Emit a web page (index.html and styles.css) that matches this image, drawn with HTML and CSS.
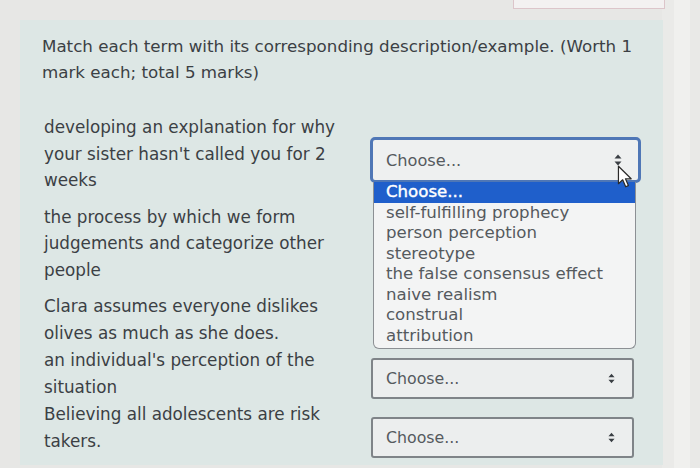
FILE: index.html
```html
<!DOCTYPE html>
<html>
<head>
<meta charset="utf-8">
<link rel="stylesheet" href="styles.css">
</head>
<body>
<div class="page">
  <div class="topbar"><div class="tab"></div></div>
  <div class="panel">
    <p class="title">Match each term with its corresponding description/example. (Worth 1 mark each; total 5 marks)</p>
    <div class="rows">
      <div class="row tall">
        <div class="term">developing an explanation for why your sister hasn't called you for 2 weeks</div>
        <div class="cell first">
          <div class="select focus"><span>Choose...</span><svg class="arrows" viewBox="0 0 8 12" width="8" height="12"><path d="M4 0.5 L7.5 4.5 H0.5 Z M4 11.5 L7.5 7.5 H0.5 Z" fill="#3a3f44"/></svg></div>
          <div class="menu">
            <div class="opt sel">Choose...</div>
            <div class="opt">self-fulfilling prophecy</div>
            <div class="opt">person perception</div>
            <div class="opt">stereotype</div>
            <div class="opt">the false consensus effect</div>
            <div class="opt">naive realism</div>
            <div class="opt">construal</div>
            <div class="opt">attribution</div>
          </div>
          <svg class="cursor" viewBox="0 0 12 19" width="15" height="23"><path d="M1 1 L1 15.5 L4.5 12.2 L7 18 L9.2 17 L6.8 11.4 L11.5 11.4 Z" fill="#ffffff" stroke="#2a2a2a" stroke-width="1" stroke-linejoin="round"/></svg>
        </div>
      </div>
      <div class="row tall">
        <div class="term">the process by which we form judgements and categorize other people</div>
        <div class="cell"><div class="select covered"><span>Choose...</span></div></div>
      </div>
      <div class="row">
        <div class="term">Clara assumes everyone dislikes olives as much as she does.</div>
        <div class="cell"><div class="select covered"><span>Choose...</span></div></div>
      </div>
      <div class="row">
        <div class="term">an individual's perception of the situation</div>
        <div class="cell mid"><div class="select"><span>Choose...</span><svg class="arrows" viewBox="0 0 8 12" width="7" height="11"><path d="M4 0.5 L7.5 4.5 H0.5 Z M4 11.5 L7.5 7.5 H0.5 Z" fill="#3a3f44"/></svg></div></div>
      </div>
      <div class="row">
        <div class="term">Believing all adolescents are risk takers.</div>
        <div class="cell low"><div class="select"><span>Choose...</span><svg class="arrows" viewBox="0 0 8 12" width="7" height="11"><path d="M4 0.5 L7.5 4.5 H0.5 Z M4 11.5 L7.5 7.5 H0.5 Z" fill="#3a3f44"/></svg></div></div>
      </div>
    </div>
  </div>
</div>
</body>
</html>
```

FILE: styles.css
```css
html, body {
  margin: 0;
  padding: 0;
}
body {
  width: 700px;
  height: 468px;
  overflow: hidden;
  font-family: "DejaVu Sans", "Open Sans", sans-serif;
  color: #3b4044;
  background: linear-gradient(to right, #e7e7e5 0, #e7e7e5 662px, #eaeae8 662px, #eaeae8 674px, #f0f0ee 674px, #f0f0ee 690px, #e9e9e7 690px);
}
.page {
  display: flex;
  flex-direction: column;
}
.topbar {
  height: 20px;
  display: flex;
  justify-content: flex-end;
  padding-right: 35px;
}
.tab {
  width: 150px;
  height: 9px;
  margin-top: -2px;
  background: #f3f1f1;
  border: 1px solid #dcc5ca;
}
.panel {
  margin-left: 20px;
  width: 643px;
  height: 445px;
  box-sizing: border-box;
  padding: 14px 0 0 22px;
  background: #dde7e5;
}
.title {
  margin: 0;
  font-size: 16.7px;
  line-height: 25.5px;
  width: 600px;
}
.rows {
  margin-top: 29px;
  display: flex;
  flex-direction: column;
}
.row {
  display: grid;
  grid-template-columns: 328px 1fr;
}
.term {
  font-size: 16.8px;
  line-height: 26.5px;
  padding-left: 2px;
  padding-right: 8px;
  padding-bottom: 1px;
}
.row.tall .term {
  padding-bottom: 10px;
}
.cell {
  position: relative;
  padding-top: 13px;
}
.cell.first {
  padding-top: 23px;
}
.cell.mid {
  padding-top: 11px;
}
.cell.low {
  padding-top: 16px;
}
.select {
  width: 263px;
  height: 41px;
  box-sizing: border-box;
  margin-left: 1px;
  border: 2px solid #7f8488;
  border-radius: 3px;
  background: #eceeee;
  padding: 0 17px 0 13px;
  display: flex;
  align-items: center;
  justify-content: space-between;
  font-size: 15.8px;
  color: #555a5e;
}
.select.covered {
  visibility: hidden;
}
.select.focus {
  width: 271px;
  height: 46px;
  margin-left: 0;
  border: 3px solid #4f77b6;
  border-radius: 5px;
  font-size: 16.2px;
  padding: 0 16px 0 13px;
  background: #eef0f0;
}
.menu {
  position: absolute;
  left: 3px;
  top: 68px;
  width: 263px;
  box-sizing: border-box;
  background: #f3f4f4;
  border: 1px solid #8c9094;
  border-top: none;
  border-radius: 0 0 6px 6px;
  padding-bottom: 2px;
  z-index: 2;
}
.opt {
  height: 20.5px;
  line-height: 20.5px;
  padding-left: 12px;
  font-size: 16.6px;
  color: #555a5e;
  white-space: nowrap;
}
.opt.sel {
  background: #1f5fcb;
  color: #ffffff;
  -webkit-text-stroke: 0.4px #ffffff;
}
.cursor {
  position: absolute;
  left: 247px;
  top: 51px;
  z-index: 3;
}
```
